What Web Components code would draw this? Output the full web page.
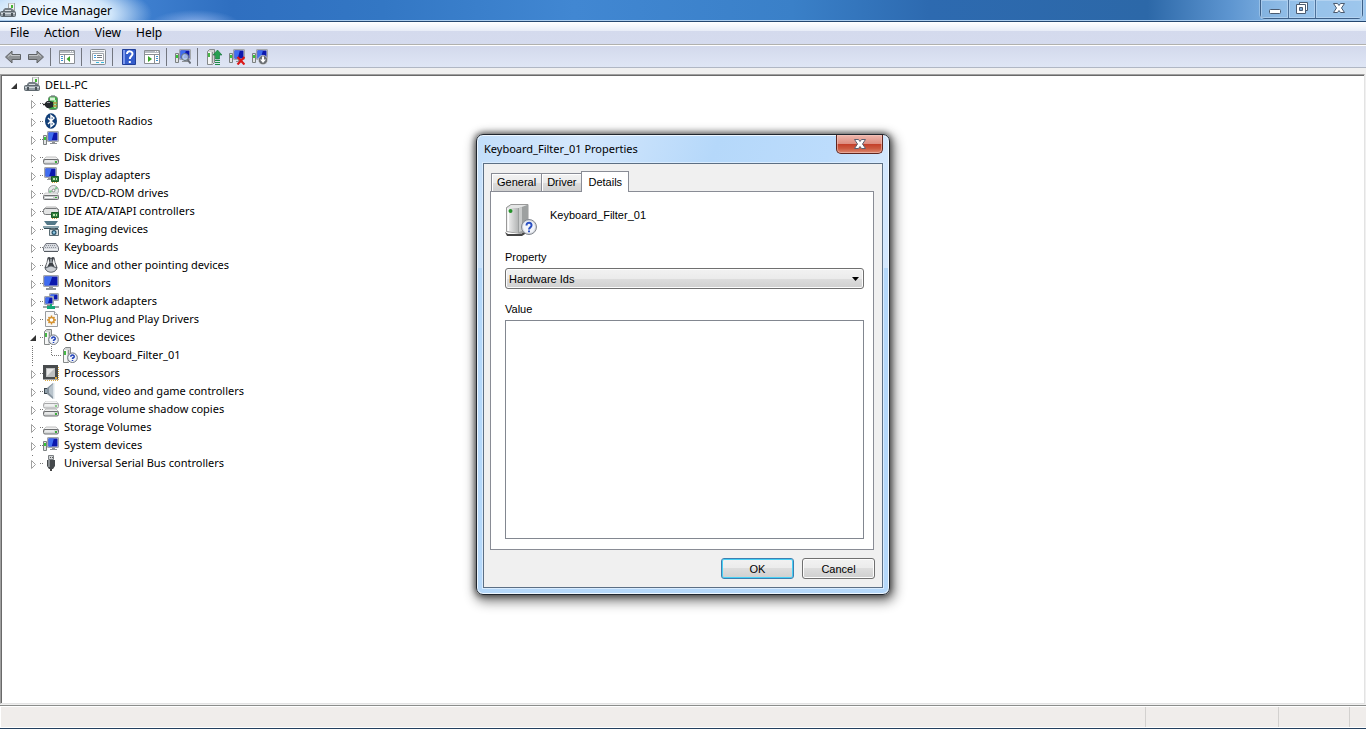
<!DOCTYPE html>
<html lang="en">
<head>
<meta charset="utf-8">
<title>Device Manager</title>
<style>
html, body { height: 100%; margin: 0; }
body { font: 12px/18px "Noto Sans", "Open Sans", sans-serif; color: #000; background: #f0f0f0; overflow: hidden; }
</style>
</head>
<body>
<device-manager></device-manager>
<script>
const screenShape = (x, y, w, h) => `<rect x="${x + .5}" y="${y + .5}" width="${w - 1}" height="${h - 1}" rx=".5" fill="#d4d7da" stroke="#a4a8ac"/><rect x="${x + 1.5}" y="${y + 1.5}" width="${w - 3}" height="${h - 3}" fill="#0b18ae"/><path d="M${x + 1.5} ${y + 1.5}h${(w - 3) * .6}l-${(w - 3) * .25} ${h - 3}h-${(w - 3) * .35}z" fill="#3f6df0"/>`;
const computer = `${screenShape(4, 0, 12, 11)}<path d="M9 11h3v1h2v1H7v-1h2z" fill="#8d9195"/><path d="M.5 4.500h3v9h-3z" fill="#e2e4e4" stroke="#7b8080"/><path d="M1 6h2v3H1z" fill="#35c435"/>`;
const help = (x, y) => `<circle cx="${x}" cy="${y}" r="4.800" fill="#eef2fa" stroke="#70767f"/><path d="M${x - 1.7} ${y - 1}c0-2.400 3.600-2.200 3.400 0c0 1.100-1.700 1-1.700 2.200M${x} ${y + 2.2}v1.200" fill="none" stroke="#2040b8" stroke-width="1.500"/>`;
const tower = `<path d="M1.500 2.500l2-2h5v13l-2 2h-5z" fill="#d3d5d5" stroke="#858989"/><path d="M2 3h3v12H2z" fill="#f5f6f6"/><path d="M2 4h2v4H2z" fill="#46b746"/><path d="M6.500 3v11" stroke="#8f9393"/>`;
const disk = (y) => `<path d="M3 ${y}h10l3 3H0z" fill="#f1f1f1" stroke="#a6a8a8" stroke-width=".7"/><rect x=".5" y="${y + 2.500}" width="15" height="4.500" rx="1.500" fill="#d5d7d7" stroke="#6d6f71"/><path d="M2 ${y + 4}h9" stroke="#f9f9f9"/><path d="M12 ${y + 4}h2v2h-2z" fill="#3cad3c"/>`;
const chip = `<path d="M8.500 9.500h7v5h-7z" fill="#31803b" stroke="#1b5b28"/><path d="M10 11h2v2h-2zM13 11h1v2h-1z" fill="#bfe3b2"/><path d="M9 15.500h5" stroke="#d0a63c" stroke-dasharray="1 1"/>`;
const pane = (arrow) => `<path d="M.5 1.500h15v13H.5z" fill="#fff" stroke="#8a8e94"/><path d="M1 2h14v2H1z" fill="#b6bbc2"/><path d="M1 5.500h14" stroke="#8a8e94"/><path d="M11 2h1v1h-1zM13 2h1v1h-1z" fill="#fff"/>${arrow}`;
const ICONS = {
  root: `<path d="M8.500.500l1-.5h5v10h-6z" fill="#f2f2f2" stroke="#a0a3a3"/><path d="M11 2h2v3h-2z" fill="#45b735"/><path d="M3 7l2-2h6l3 2v2H3z" fill="#777f86"/><path d="M5 7h6v2H5z" fill="#d8dde0"/><rect x=".5" y="8.500" width="15" height="5" rx="1" fill="#98a1a8" stroke="#5f686e"/><path d="M1 10.500h14" stroke="#d3d9dc"/><path d="M3 10h2v3H3zM11 10h2v3h-2z" fill="#4d555b"/>`,
  battery: `<path d="M8 0h4v2H8z" fill="#a5adb1"/><rect x="5.500" y="1.500" width="9" height="13" rx="2.500" fill="#3fae49" stroke="#6f8a73"/><path d="M7 2.500h5v3H7z" fill="#d9f4d6"/><path d="M11 5h2v8h-2z" fill="#a2e4a0"/><path d="M4 6h3l3 1v5l-3 1H4L2 11V8z" fill="#24282c"/><path d="M4 7.500h3" stroke="#8b9196"/><path d="M10 8h4M10 11h4" stroke="#b88f3c" stroke-width="1.500"/><path d="M0 9.500h3" stroke="#222" stroke-width="1.500"/>`,
  bluetooth: `<ellipse cx="8" cy="8" rx="6" ry="7.800" fill="#123f78"/><path d="M5 5l6 6L8 13.500V2.500L11 5L5 11" fill="none" stroke="#fff" stroke-width="1.400"/>`,
  computer,
  disk: disk(8),
  display: `${screenShape(1, 0, 13, 11)}<path d="M5 11h4v1h1v1H4v-1h1z" fill="#999"/>${chip}`,
  dvd: `<circle cx="10.500" cy="5.500" r="5" fill="#e5e9ea" stroke="#9ea2a4"/><path d="M10.500 5.500L13 1.500l2 2zM10.500 5.500l-4 3-.5-3z" fill="#7fc98e"/><circle cx="10.500" cy="5.500" r="1.400" fill="#fff" stroke="#888"/><path d="M2 8h12l2 3H0z" fill="#ededed" stroke="#aaa" stroke-width=".5"/><rect x=".5" y="10.500" width="15" height="4" rx="1" fill="#c9cccd" stroke="#6d6f71"/><path d="M2 12.500h8" stroke="#fff"/><path d="M12 12h2v1h-2z" fill="#3cad3c"/>`,
  ide: `<path d="M3 4h10l3 3H0z" fill="#efefef" stroke="#999" stroke-width=".7"/><rect x=".5" y="5.500" width="15" height="6" rx="2" fill="#e3e4e4" stroke="#77797b"/>${chip}`,
  imaging: `<path d="M1 0h14l-3 4H4z" fill="#547989"/><path d="M0 5h16v2H0z" fill="#8ba5af"/><path d="M1 7h14v1H1z" fill="#36505b"/><path d="M6.500 8.500h9v6h-9z" fill="#d7dde0" stroke="#596a72"/><path d="M8 7h4v2H8z" fill="#596a72"/><circle cx="11" cy="11.500" r="2.500" fill="#29536b"/><circle cx="11" cy="11.500" r="1.200" fill="#90cbe7"/>`,
  keyboard: `<path d="M3 4.500h10l2.500 4v3l-1 1h-13l-1-1v-3z" fill="#d8dbe0" stroke="#70747d"/><path d="M3 6.500h10M2 8.500h12" stroke="#8d929b" stroke-dasharray="1 1"/><path d="M1 10.500h14" stroke="#eef0f3"/><path d="M1 12.500h14" stroke="#555a61"/>`,
  mouse: `<path d="M5 .5h2l1 1 1-1h2l1 5 2 5c0 6-12 6-12 0l2-5z" fill="#3c4046" stroke="#5c6066"/><path d="M5.500 1.500l1 4-2.500 5-1-1zM10.500 1.500l-1 4 2.500 5 1-1z" fill="#eef0f2"/><path d="M2.500 11c0 5.500 11 5.500 11 0L8 9z" fill="#ccd0d5" stroke="#626971" stroke-width=".8"/><path d="M7 2h2v4H7z" fill="#8f979d"/>`,
  monitor: `${screenShape(0, 0, 16, 12)}<path d="M6 12h4v1h3v2H3v-2h3z" fill="#8e9398"/>`,
  network: `${screenShape(6, 0, 10, 8)}${screenShape(1, 3, 10, 9)}<path d="M4 12h3v1H4z" fill="#888"/><path d="M0 14h16" stroke="#9da6a6" stroke-width="2"/><path d="M4 13h8v3H4zM7 11h2v3H7z" fill="#18a978"/>`,
  driver: `<path d="M2.500.500h9l3 3v12h-12z" fill="#f8f8f8" stroke="#989b9f"/><path d="M11.500.500v3h3" fill="#fff" stroke="#989b9f"/><circle cx="8.500" cy="9" r="2.500" fill="#fff" stroke="#d99632" stroke-width="1.500"/><path d="M8.500 4.500v2M8.500 11.500v2M4 9h2M11 9h2M5.500 6l1 1M11.500 12l-1-1M11.500 6l-1 1M5.500 12l1-1" stroke="#d08d2e" stroke-width="1.500"/>`,
  unknown: `${tower}${help(10.5, 10.7)}`,
  cpu: `<path d="M2 15.500h13M15.500 2v13" stroke="#d9ac49" stroke-dasharray="1 1"/><rect x="0" y="0" width="15" height="14.500" fill="#484b4d"/><path d="M3 3h9v9H3z" fill="#bfc1c1"/><path d="M4 4h7l-7 7z" fill="#e8e8e8"/><path d="M12 12h2v2h-2z" fill="#e0a637"/>`,
  sound: `<path d="M1 5h4v6H1z" fill="#3e4850"/><path d="M4 5l6-5h1v16h-1l-6-5z" fill="#84919c"/><path d="M6 5l4-4v13l-4-4z" fill="#b9c4cc"/><path d="M10 0h1.500v16H10z" fill="#dce3e8"/><path d="M2 6h2v4H2z" fill="#93a3ae"/>`,
  shadow: `<g opacity=".6">${disk(0)}</g>${disk(8)}`,
  usb: `<path d="M5.500.500h5v4h-5z" fill="#d1d4d6" stroke="#7a7e81"/><path d="M7 2h1v1H7zM9 2h1v1H9z" fill="#555"/><path d="M4 5h8v6l-2 3H6l-2-3z" fill="#45494c"/><path d="M5 5h2v7H5z" fill="#888d90"/><path d="M7 14h2v2H7z" fill="#444"/>`,
  back: `<path d="M.5 8L7 2v3.500h8.500v5H7V14z" fill="#8f9295" stroke="#5f6265"/><path d="M3 7.500L6 5v1.500h9" fill="none" stroke="#c2c4c6"/>`,
  forward: `<path d="M15.500 8L9 2v3.500H.500v5H9V14z" fill="#8f9295" stroke="#5f6265"/><path d="M1 6.500h9V5l3 2.500" fill="none" stroke="#c2c4c6"/>`,
  showTree: pane(`<path d="M5.500 6v8" stroke="#8a8e94"/><path d="M2 7.500h2M2 9.500h2M2 11.500h2" stroke="#3d8fd0"/><path d="M11 7v6L7.500 10z" fill="#39a52b"/>`),
  actionPane: pane(`<path d="M10.500 6v8" stroke="#8a8e94"/><path d="M12 7.500h2M12 9.500h2M12 11.500h2" stroke="#3d8fd0"/><path d="M4 7v6l4-3z" fill="#39a52b"/>`),
  properties: `<rect x=".5" y=".5" width="15" height="15" rx="1" fill="#f5f6f7" stroke="#858b92"/><path d="M2 2.500h12" stroke="#aab0b7"/><path d="M2.500 4.500h11v7h-11z" fill="#fff" stroke="#a1a6ac"/><path d="M4 6.500h2M4 8.500h2" stroke="#3b9be0"/><path d="M7 6.500h5M7 8.500h5" stroke="#777d84"/><path d="M6 13.500h3M11 13.500h3" stroke="#37b8df"/>`,
  help: `<path d="M1.500.500h13v15h-13z" fill="#345dcb" stroke="#203f99"/><path d="M2 1h2v14H2z" fill="#7d9aee"/><path d="M6 5c0-4 6-3 5.500 0C11.500 7 8.800 7 8.800 10M8.800 12v2" fill="none" stroke="#fff" stroke-width="2"/>`,
  scan: `${computer}<circle cx="10" cy="8" r="3.500" fill="#cfe4f6" fill-opacity=".75" stroke="#65717d"/><path d="M12.500 10.500l3 4" stroke="#656b75" stroke-width="2"/>`,
  update: `${tower}<path d="M11.500 1L16 6h-2.500v4h-4V6H7z" fill="#27a050" stroke="#147138" stroke-width=".6"/><path d="M9 11.500h5M9 13.500h5M9 15.500h5" stroke="#1f8b47"/>`,
  uninstall: `${computer}<path d="M8.500 8l7 7.500M15.500 8l-7 7.500" stroke="#db1818" stroke-width="2.200"/>`,
  disable: `${computer}<circle cx="11" cy="11" r="4.700" fill="#6c7074" stroke="#eceeef" stroke-width=".6"/><path d="M10 7.500h2v3h2L11 14l-3-3.500h2z" fill="#fff"/>`
};

const define = (name, markup, init) => {
  const template = document.createElement("template");
  template.innerHTML = markup;
  customElements.define(name, class extends HTMLElement {
    connectedCallback() {
      if (this.shadowRoot) return;
      this.attachShadow({ mode: "open" }).append(template.content.cloneNode(true));
      if (init) init(this, this.shadowRoot);
    }
  });
};

define("dm-icon", `<style>:host{display:block;flex:none;width:16px;height:16px}svg{display:block;width:100%;height:100%}</style><svg viewBox="0 0 16 16" aria-hidden="true"></svg>`,
  (el, root) => { root.querySelector("svg").innerHTML = ICONS[el.getAttribute("name")]; });

define("dm-titlebar", `<style>
:host{display:flex;box-sizing:border-box;height:22px;border-bottom:1px solid #23466f;padding-right:3px;box-shadow:inset 0 -1px #a9cbec;
 background:radial-gradient(ellipse 100px 34px at 52px 14px,#eaf5fe 0 35%,#cfe5fa 60%,#b9d8f500),radial-gradient(ellipse 45px 14px at 195px 24px,#a5c1f3cc,#9fbdf000),linear-gradient(90deg,#85b4e6 0,#3f80d0 10%,#2f6fc0 17%,#3377c4 28%,#4187d2 42%,#3a80c8 58%,#2d6ab0 68%,#2c68a8 84%,#5d95d0 90%,#8fbde9 95%,#9cc6ee)}
dm-icon{margin:3px 5px 0 0}
h1{flex:1;margin:0;font:inherit;line-height:22px}
.controls{display:flex;height:18px;border:1px solid #3d5f87;border-top:0;border-radius:0 0 5px 5px;box-shadow:0 0 0 1px #b8d6f088}
button{display:flex;justify-content:center;align-items:center;box-sizing:border-box;height:18px;width:27px;padding:0 0 2px;border:0;background:#a3c8ea55;box-shadow:inset 0 0 0 1px #c9e0f588}
button+button{border-left:1px solid #4d719a}
.close{width:47px}
svg{display:block}
</style>
<dm-icon name="root"></dm-icon><h1><slot></slot></h1>
<div class="controls">
<button aria-label="Minimize"><svg width="14" height="14"><rect x="1.500" y="8.500" width="11" height="4" rx="1" fill="#fff" stroke="#4b5b70"/></svg></button>
<button aria-label="Restore"><svg width="14" height="14"><path d="M4.500 1.500h8v8h-2v3h-9v-9h3z" fill="#fff" stroke="#4b5b70"/><path d="M4.500 6.500h3v3h-3z" fill="#7eaad8" stroke="#4b5b70"/><path d="M4 3.500h6.500V10" fill="none" stroke="#4b5b70"/></svg></button>
<button class="close" aria-label="Close"><svg width="14" height="14"><path d="M1.500 2.500h4L7 4.500l1.500-2h4L9.500 7l3 4.500h-4L7 9.500l-1.500 2h-4L4.500 7z" fill="#fff" stroke="#4b5b70"/></svg></button>
</div>`);

define("dm-menubar", `<style>
:host{display:flex;box-sizing:border-box;height:23px;padding-left:2px;border-bottom:1px solid #b1b1ae;background:linear-gradient(#fff,#e7ecf7 9px,#d4daed 9px,#d5dbee)}
button{border:0;padding:0 7px 0 8px;background:none;font:inherit;line-height:22px}
</style>`, (el, root) => {
  for (const text of ["File", "Action", "View", "Help"]) {
    const button = document.createElement("button");
    button.textContent = text;
    root.append(button);
  }
});

define("dm-toolbar", `<style>
:host{display:flex;box-sizing:border-box;align-items:center;height:23px;padding-left:5px;gap:7px;background:linear-gradient(#fff 1px,#d3d9ec 1px,#dfe6f5);border-bottom:1px solid #b0b7c4}
button{flex:none;padding:2px 0 0;border:0;background:none}
i{width:1px;height:18px;margin:2px 1px 0 -1px;background:#72767f}
</style>
<button aria-label="Back"><dm-icon name="back"></dm-icon></button><button aria-label="Forward"><dm-icon name="forward"></dm-icon></button><i></i>
<button aria-label="Show console tree"><dm-icon name="showTree"></dm-icon></button><i></i>
<button aria-label="Properties"><dm-icon name="properties"></dm-icon></button><i></i>
<button aria-label="Help"><dm-icon name="help"></dm-icon></button><button aria-label="Show action pane"><dm-icon name="actionPane"></dm-icon></button><i></i>
<button aria-label="Scan for hardware changes"><dm-icon name="scan"></dm-icon></button><i></i>
<button aria-label="Update driver"><dm-icon name="update"></dm-icon></button><button aria-label="Uninstall"><dm-icon name="uninstall"></dm-icon></button><button aria-label="Disable"><dm-icon name="disable"></dm-icon></button>`);

const DOT = `stroke="#777" stroke-dasharray="1 1" fill="none"`;
const TWISTY = {
  blank: "",
  root: `<path d="M12 7v6H6z" fill="#333"/>`,
  open: `<path d="M8.500 1v1M16 9.500h3" ${DOT}/><path d="M12 7v6H6z" fill="#333"/>`,
  closed: `<path d="M8.500 1v1M16 9.500h3" ${DOT}/><path d="M7.500 6.500v8l4-4z" fill="#fff" stroke="#a0a0a0"/>`,
  leaf: `<path d="M8.500 0v9M9 9.500h10" ${DOT}/>`,
  line: `<path d="M8.500 0v18" ${DOT}/>`
};
define("dm-tree-item", `<style>
:host{display:flex;height:18px;align-items:center;white-space:nowrap}
svg{flex:none;width:19px;height:18px}
dm-icon{margin-right:5px}
</style><slot></slot>`, (el, root) => {
  const level = Number(el.getAttribute("level"));
  const cells = [el.getAttribute("twisty")];
  if (level > 1) cells.unshift("line");
  if (level > 0) cells.unshift("blank");
  root.querySelector("slot").insertAdjacentHTML("beforebegin",
    cells.map((kind) => `<svg viewBox="0 0 19 18" aria-hidden="true">${TWISTY[kind]}</svg>`).join("") +
    `<dm-icon name="${el.getAttribute("icon")}"></dm-icon>`);
});

define("dm-tree", `<style>
:host{display:block;flex:1;min-height:0;overflow:hidden;box-sizing:border-box;border:1px solid;border-color:#a0a0a0 #e3e3e3 #e3e3e3 #a0a0a0;box-shadow:inset 1px 1px #696969;padding:1px 0 0 4px;background:#fff;font-size:11px}
</style>`, (el, root) => {
  const rows = [[0, "root", "root", "DELL-PC"], [1, "closed", "battery", "Batteries"], [1, "closed", "bluetooth", "Bluetooth Radios"], [1, "closed", "computer", "Computer"], [1, "closed", "disk", "Disk drives"], [1, "closed", "display", "Display adapters"], [1, "closed", "dvd", "DVD/CD-ROM drives"], [1, "closed", "ide", "IDE ATA/ATAPI controllers"], [1, "closed", "imaging", "Imaging devices"], [1, "closed", "keyboard", "Keyboards"], [1, "closed", "mouse", "Mice and other pointing devices"], [1, "closed", "monitor", "Monitors"], [1, "closed", "network", "Network adapters"], [1, "closed", "driver", "Non-Plug and Play Drivers"], [1, "open", "unknown", "Other devices"], [2, "leaf", "unknown", "Keyboard_Filter_01"], [1, "closed", "cpu", "Processors"], [1, "closed", "sound", "Sound, video and game controllers"], [1, "closed", "shadow", "Storage volume shadow copies"], [1, "closed", "disk", "Storage Volumes"], [1, "closed", "computer", "System devices"], [1, "closed", "usb", "Universal Serial Bus controllers"]];
  for (const [level, twisty, icon, label] of rows) {
    const item = document.createElement("dm-tree-item");
    item.setAttribute("level", level);
    item.setAttribute("twisty", twisty);
    item.setAttribute("icon", icon);
    item.textContent = label;
    root.append(item);
  }
});

define("dm-statusbar", `<style>
:host{display:flex;box-sizing:border-box;height:24px;padding:1px;border-top:1px solid #8b8d8b;border-bottom:1px solid #24405f;background:#f0edeb;box-shadow:inset 0 1px #fff,inset 0 -1px #fff,inset 1px 0 #fff}
span{border-right:1px solid #d3d1cf;box-sizing:border-box;width:71px}
.message{flex:1}
.progress{width:133px}
.grip{width:15px;border:0}
</style><span class="message"></span><span class="progress"></span><span></span><span class="grip"></span>`);

define("dm-tab", `<style>
:host{display:block}
button{box-sizing:border-box;height:18px;padding:0 5px;border:1px solid #898c95;border-bottom:0;background:linear-gradient(#f3f3f3,#ebebeb 50%,#dddddd 50%,#d0d0d0);font:inherit;line-height:17px;box-shadow:inset 1px 1px #fff;display:block}
:host([selected]) button{height:21px;padding:0 6px;margin-bottom:-1px;background:#fff;line-height:18px;position:relative}
:host(:not([selected])) button{border-right-width:0}
</style><button role="tab"><slot></slot></button>`);

define("dm-button", `<style>
:host{display:block}
button{display:block;box-sizing:border-box;width:73px;height:21px;padding:0;border:1px solid #707070;border-radius:3px;background:linear-gradient(#f2f2f2,#ebebeb 50%,#dddddd 50%,#cfcfcf);box-shadow:inset 0 0 0 1px #fcfcfc;font:inherit}
:host([primary]) button{border-color:#3c7fb1;box-shadow:inset 0 0 0 1px #48d0f5}
</style><button><slot></slot></button>`);

define("properties-dialog", `<style>
:host{display:flex;flex-direction:column;box-sizing:border-box;width:414px;height:461px;border:1px solid #20262e;border-radius:7px;padding:0 6px 6px;
 background:linear-gradient(#dcebfc00 133px,#b5d8fa 133px),linear-gradient(110deg,#c2defa,#d4e7fc 18%,#b5d8fa 42%,#bcdcfc 62%,#d3e7fd 72%,#d5e8fd);
 box-shadow:inset 0 0 0 1px #eef7ff,0 0 6px 1px #0009,2px 4px 12px 3px #0007;font:11px/14px "Liberation Sans",Arial,sans-serif}
header{display:flex;height:28px;padding-left:1px}
h2{flex:1;margin:0;font:11px/28px "Noto Sans","Open Sans",sans-serif}
.close{display:flex;justify-content:center;align-items:center;box-sizing:border-box;width:47px;height:19px;padding:0;border:1px solid #5e2620;border-top:0;border-radius:0 0 5px 5px;background:linear-gradient(#efb8ae,#dd8d80 48%,#c33d28 50%,#cc5a40 75%,#dd8a73);box-shadow:inset 0 0 0 1px #f5c9c088}
.frame{display:flex;flex-direction:column;flex:1;box-sizing:border-box;border:1px solid #5c6f84;background:#f0f0f0;padding:7px 8px 8px 6px;box-shadow:0 0 0 1px #d9ecff}
.tabs{display:flex;align-items:flex-end;height:20px;padding-left:1px}
.pane{display:flex;flex-direction:column;flex:1;box-sizing:border-box;border:1px solid #898c95;background:#fff;padding:12px 9px 10px 14px}
.device{display:flex;gap:13px;height:46px}
.device svg{flex:none}
.device p{margin:4px 0 0}
label{line-height:14px}
select{appearance:none;box-sizing:border-box;width:100%;height:21px;margin:4px 0 13px;border:1px solid #707070;border-radius:3px;padding:0 3px;font:inherit;color:#000;
 background:url("data:image/svg+xml,%3Csvg xmlns='http://www.w3.org/2000/svg' width='7' height='4'%3E%3Cpath d='M0 0h7L3.500 4z'/%3E%3C/svg%3E") no-repeat right 4px center,linear-gradient(#f2f2f2,#ebebeb 50%,#dddddd 50%,#cfcfcf);box-shadow:inset 0 0 0 1px #fcfcfc}
textarea{flex:1;box-sizing:border-box;width:100%;margin:4px 0 0;border:1px solid #828790;border-radius:0;padding:2px;resize:none;background:#fff;font:inherit;outline:0}
footer{display:flex;justify-content:flex-end;gap:8px;padding-top:8px;margin-right:-1px}
</style>
<header><h2>Keyboard_Filter_01 Properties</h2><button class="close" aria-label="Close"><svg width="14" height="14"><path d="M1.500 2.500h4L7 4.500l1.500-2h4L9.500 7l3 4.500h-4L7 9.500l-1.500 2h-4L4.500 7z" fill="#fff" stroke="#5c6070"/></svg></button></header>
<div class="frame">
<div class="tabs" role="tablist"><dm-tab>General</dm-tab><dm-tab>Driver</dm-tab><dm-tab selected>Details</dm-tab></div>
<div class="pane">
<div class="device"><svg width="32" height="32" viewBox="0 0 32 32" aria-hidden="true"><defs><linearGradient id="g"><stop stop-color="#f5f5f5"/><stop offset="1" stop-color="#b4b6b6"/></linearGradient></defs><path d="M0 28l3 2h13l7-6v4l-6 4H2z" fill="#454545"/><path d="M1.500 3.500L6 .500h17v25l-7 4-14.500-2z" fill="#a3a6a6" stroke="#999"/><path d="M2 4h11v25L2 27z" fill="url(#g)"/><path d="M13 4l10-3v24l-10 4z" fill="#9da0a0"/><path d="M14 4l3-1v24l-3 1z" fill="#c9cbcb"/><path d="M2 4L6 1h16l-8 3z" fill="#e4e5e5"/><path d="M3.500 5v22" stroke="#fff"/><circle cx="5.500" cy="7" r="2" fill="#24912a"/><circle cx="24" cy="23" r="7.500" fill="#d5d9e0" stroke="#84888f"/><circle cx="24" cy="23" r="6" fill="#f3f5fa"/><path d="M21.500 21.500c0-4 5.500-3.500 5 0c0 1.800-2.500 2-2.500 4M24 26.500v1.700" fill="none" stroke="#294fc2" stroke-width="2"/></svg><p>Keyboard_Filter_01</p></div>
<label for="property">Property</label>
<select id="property"><option>Hardware Ids</option></select>
<label for="value">Value</label>
<textarea id="value" readonly></textarea>
</div>
<footer><dm-button primary>OK</dm-button><dm-button>Cancel</dm-button></footer>
</div>`);

define("device-manager", `<style>
:host{display:flex;flex-direction:column;height:100vh;position:relative}
.content{flex:1;min-height:0;display:flex;padding:6px 1px 1px 0;background:#f0f0f0}
.overlay{position:absolute;inset:0;display:grid;place-items:center}
</style>
<dm-titlebar>Device Manager</dm-titlebar><dm-menubar></dm-menubar><dm-toolbar></dm-toolbar>
<div class="content"><dm-tree></dm-tree></div>
<dm-statusbar></dm-statusbar>
<div class="overlay"><properties-dialog role="dialog" aria-label="Keyboard_Filter_01 Properties"></properties-dialog></div>`);
</script>
</body>
</html>
